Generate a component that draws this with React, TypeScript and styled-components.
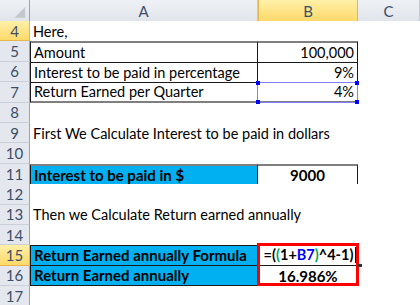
import React from "react";
import styled, { createGlobalStyle, css } from "styled-components";

const Global = createGlobalStyle`
  html, body {
    margin: 0;
    padding: 0;
    background: #ffffff;
  }
  body {
    font-family: Lato, "Liberation Sans", sans-serif;
    overflow: hidden;
  }
`;

const COLS = "30px 228px 100px 1fr";
const ROW_H = "20.4px";

type Edge = "none" | "thin" | "thick";

const edge = (e?: Edge) =>
  e === "thick" ? "2px solid #7f7f7f" : e === "thin" ? "1px solid #1a1a1a" : "none";

export default function App() {
  return (
    <>
      <Global />
      <Sheet>
        <HeaderRow>
          <Corner>
            <svg width="30" height="21" viewBox="0 0 30 21">
              <polygon points="26,7 26,18 15,18" fill="#c3c8cf" />
            </svg>
          </Corner>
          <ColHead>A</ColHead>
          <ColHead $active>B</ColHead>
          <ColHead>C</ColHead>
        </HeaderRow>

        <Row>
          <RowHead $active>4</RowHead>
          <Cell>Here,</Cell>
          <Cell />
          <Cell />
        </Row>
        <Row>
          <RowHead>5</RowHead>
          <Cell $top="thick" $left="thin" $right="thin">Amount</Cell>
          <Cell $top="thick" $right="thin" $align="right">100,000</Cell>
          <Cell />
        </Row>
        <Row>
          <RowHead>6</RowHead>
          <Cell $top="thin" $left="thin" $right="thin">Interest to be paid in percentage</Cell>
          <Cell $top="thin" $right="thin" $align="right">9%</Cell>
          <Cell />
        </Row>
        <Row>
          <RowHead>7</RowHead>
          <Cell $top="thin" $bottom="thick" $left="thin" $right="thin">Return Earned per Quarter</Cell>
          <Cell $top="thin" $bottom="thick" $right="thin" $align="right">
            4%
            <RefBox>
              <Handle $x="left" $y="top" />
              <Handle $x="right" $y="top" />
              <Handle $x="left" $y="bottom" />
              <Handle $x="right" $y="bottom" />
            </RefBox>
          </Cell>
          <Cell />
        </Row>
        <Row>
          <RowHead>8</RowHead>
          <Cell />
          <Cell />
          <Cell />
        </Row>
        <Row>
          <RowHead>9</RowHead>
          <Cell $overflow>First We Calculate Interest to be paid in dollars</Cell>
          <Cell />
          <Cell />
        </Row>
        <Row>
          <RowHead>10</RowHead>
          <Cell />
          <Cell />
          <Cell />
        </Row>
        <Row>
          <RowHead>11</RowHead>
          <Cell $fill $bold $top="thick" $bottom="thin" $left="thin" $right="thin">
            Interest to be paid in $
          </Cell>
          <Cell $bold $top="thick" $bottom="thin" $right="thin" $align="center">9000</Cell>
          <Cell />
        </Row>
        <Row>
          <RowHead>12</RowHead>
          <Cell />
          <Cell />
          <Cell />
        </Row>
        <Row>
          <RowHead>13</RowHead>
          <Cell $overflow>Then we Calculate Return earned annually</Cell>
          <Cell />
          <Cell />
        </Row>
        <Row>
          <RowHead>14</RowHead>
          <Cell />
          <Cell />
          <Cell />
        </Row>
        <Row>
          <RowHead $active>15</RowHead>
          <Cell $fill $bold $top="thin" $bottom="thin" $left="thin" $right="thin">
            Return Earned annually Formula
          </Cell>
          <Cell $bold $align="center" $bottom="thin">
            <Formula>
              =(<Paren>(</Paren>1+<Ref>B7</Ref><Paren>)</Paren>^4-1)
              <Caret />
            </Formula>
            <FillHandle />
          </Cell>
          <Cell />
        </Row>
        <Row>
          <RowHead>16</RowHead>
          <Cell $fill $bold $bottom="thin" $left="thin" $right="thin">
            Return Earned annually
          </Cell>
          <Cell $bold $align="center">16.986%</Cell>
          <Cell />
        </Row>
        <Row>
          <RowHead>17</RowHead>
          <Cell />
          <Cell />
          <Cell />
        </Row>

        <RedBox />
      </Sheet>
    </>
  );
}

const Sheet = styled.div`
  position: relative;
  width: 420px;
  height: 305px;
  overflow: hidden;
  font-size: 14.5px;
  color: #000;
`;

const HeaderRow = styled.div`
  display: grid;
  grid-template-columns: ${COLS};
  height: 21px;
`;

const headBase = css`
  box-sizing: border-box;
  background: linear-gradient(#eef1f5, #e1e5eb);
  border-right: 1px solid #c4cad3;
  border-bottom: 1px solid #9aa3b0;
  color: #3c4e68;
  display: flex;
  align-items: center;
  justify-content: center;
`;

const Corner = styled.div`
  ${headBase};
  border-right: 1px solid #9aa3b0;
  svg {
    display: block;
  }
`;

const ColHead = styled.div<{ $active?: boolean }>`
  ${headBase};
  font-size: 15px;
  ${(p) =>
    p.$active &&
    css`
      background: linear-gradient(#fff0a8, #fdd96a);
      border-right: 1px solid #e8b54d;
      border-left: 1px solid #e8b54d;
      border-bottom: 1px solid #e8b54d;
    `}
`;

const Row = styled.div`
  display: grid;
  grid-template-columns: ${COLS};
  height: ${ROW_H};
`;

const RowHead = styled.div<{ $active?: boolean }>`
  box-sizing: border-box;
  background: #e4e8ee;
  border-right: 1px solid #9aa3b0;
  border-bottom: 1px solid #c9d0da;
  color: #3c4e68;
  font-size: 15px;
  display: flex;
  align-items: center;
  justify-content: center;
  ${(p) =>
    p.$active &&
    css`
      background: linear-gradient(#fff0a8, #fdd96a);
      border-right: 1px solid #e8b54d;
      border-bottom: 1px solid #e8b54d;
    `}
`;

const Cell = styled.div<{
  $top?: Edge;
  $bottom?: Edge;
  $left?: Edge;
  $right?: Edge;
  $align?: "left" | "right" | "center";
  $bold?: boolean;
  $fill?: boolean;
  $overflow?: boolean;
}>`
  position: relative;
  box-sizing: border-box;
  padding: 0 3px;
  display: flex;
  align-items: center;
  justify-content: ${(p) =>
    p.$align === "right" ? "flex-end" : p.$align === "center" ? "center" : "flex-start"};
  white-space: nowrap;
  font-weight: ${(p) => (p.$bold ? 700 : 400)};
  font-size: ${(p) => (p.$bold ? "15px" : "14.5px")};
  background: ${(p) => (p.$fill ? "#00b0f0" : "#ffffff")};
  border-top: ${(p) => edge(p.$top)};
  border-bottom: ${(p) => edge(p.$bottom)};
  border-left: ${(p) => edge(p.$left)};
  border-right: ${(p) => edge(p.$right)};
  ${(p) =>
    p.$overflow &&
    css`
      z-index: 1;
      background: transparent;
    `}
`;

const RefBox = styled.div`
  position: absolute;
  z-index: 3;
  left: -1px;
  top: -1px;
  right: -1px;
  bottom: -2px;
  border: 1px solid #8080ff;
  pointer-events: none;
`;

const Handle = styled.span<{ $x: "left" | "right"; $y: "top" | "bottom" }>`
  position: absolute;
  width: 4px;
  height: 4px;
  background: #0000ff;
  ${(p) => (p.$x === "left" ? "left: -2px;" : "right: -2px;")}
  ${(p) => (p.$y === "top" ? "top: -2px;" : "bottom: -2px;")}
`;

const Formula = styled.span`
  display: inline-flex;
  align-items: center;
  font-size: 14.5px;
  margin-left: 4px;
`;

const Paren = styled.span`
  color: #00a651;
`;

const Ref = styled.span`
  color: #0000ff;
`;

const Caret = styled.span`
  display: inline-block;
  width: 1px;
  height: 16px;
  margin-left: 2px;
  background: #000;
`;

const FillHandle = styled.span`
  position: absolute;
  z-index: 3;
  right: -4px;
  bottom: -2px;
  width: 4px;
  height: 3px;
  background: #333;
`;

const RedBox = styled.div`
  position: absolute;
  left: 257px;
  top: 243px;
  width: 102px;
  height: 43px;
  box-sizing: border-box;
  border: 3px solid #ff0000;
  pointer-events: none;
  z-index: 2;
`;
